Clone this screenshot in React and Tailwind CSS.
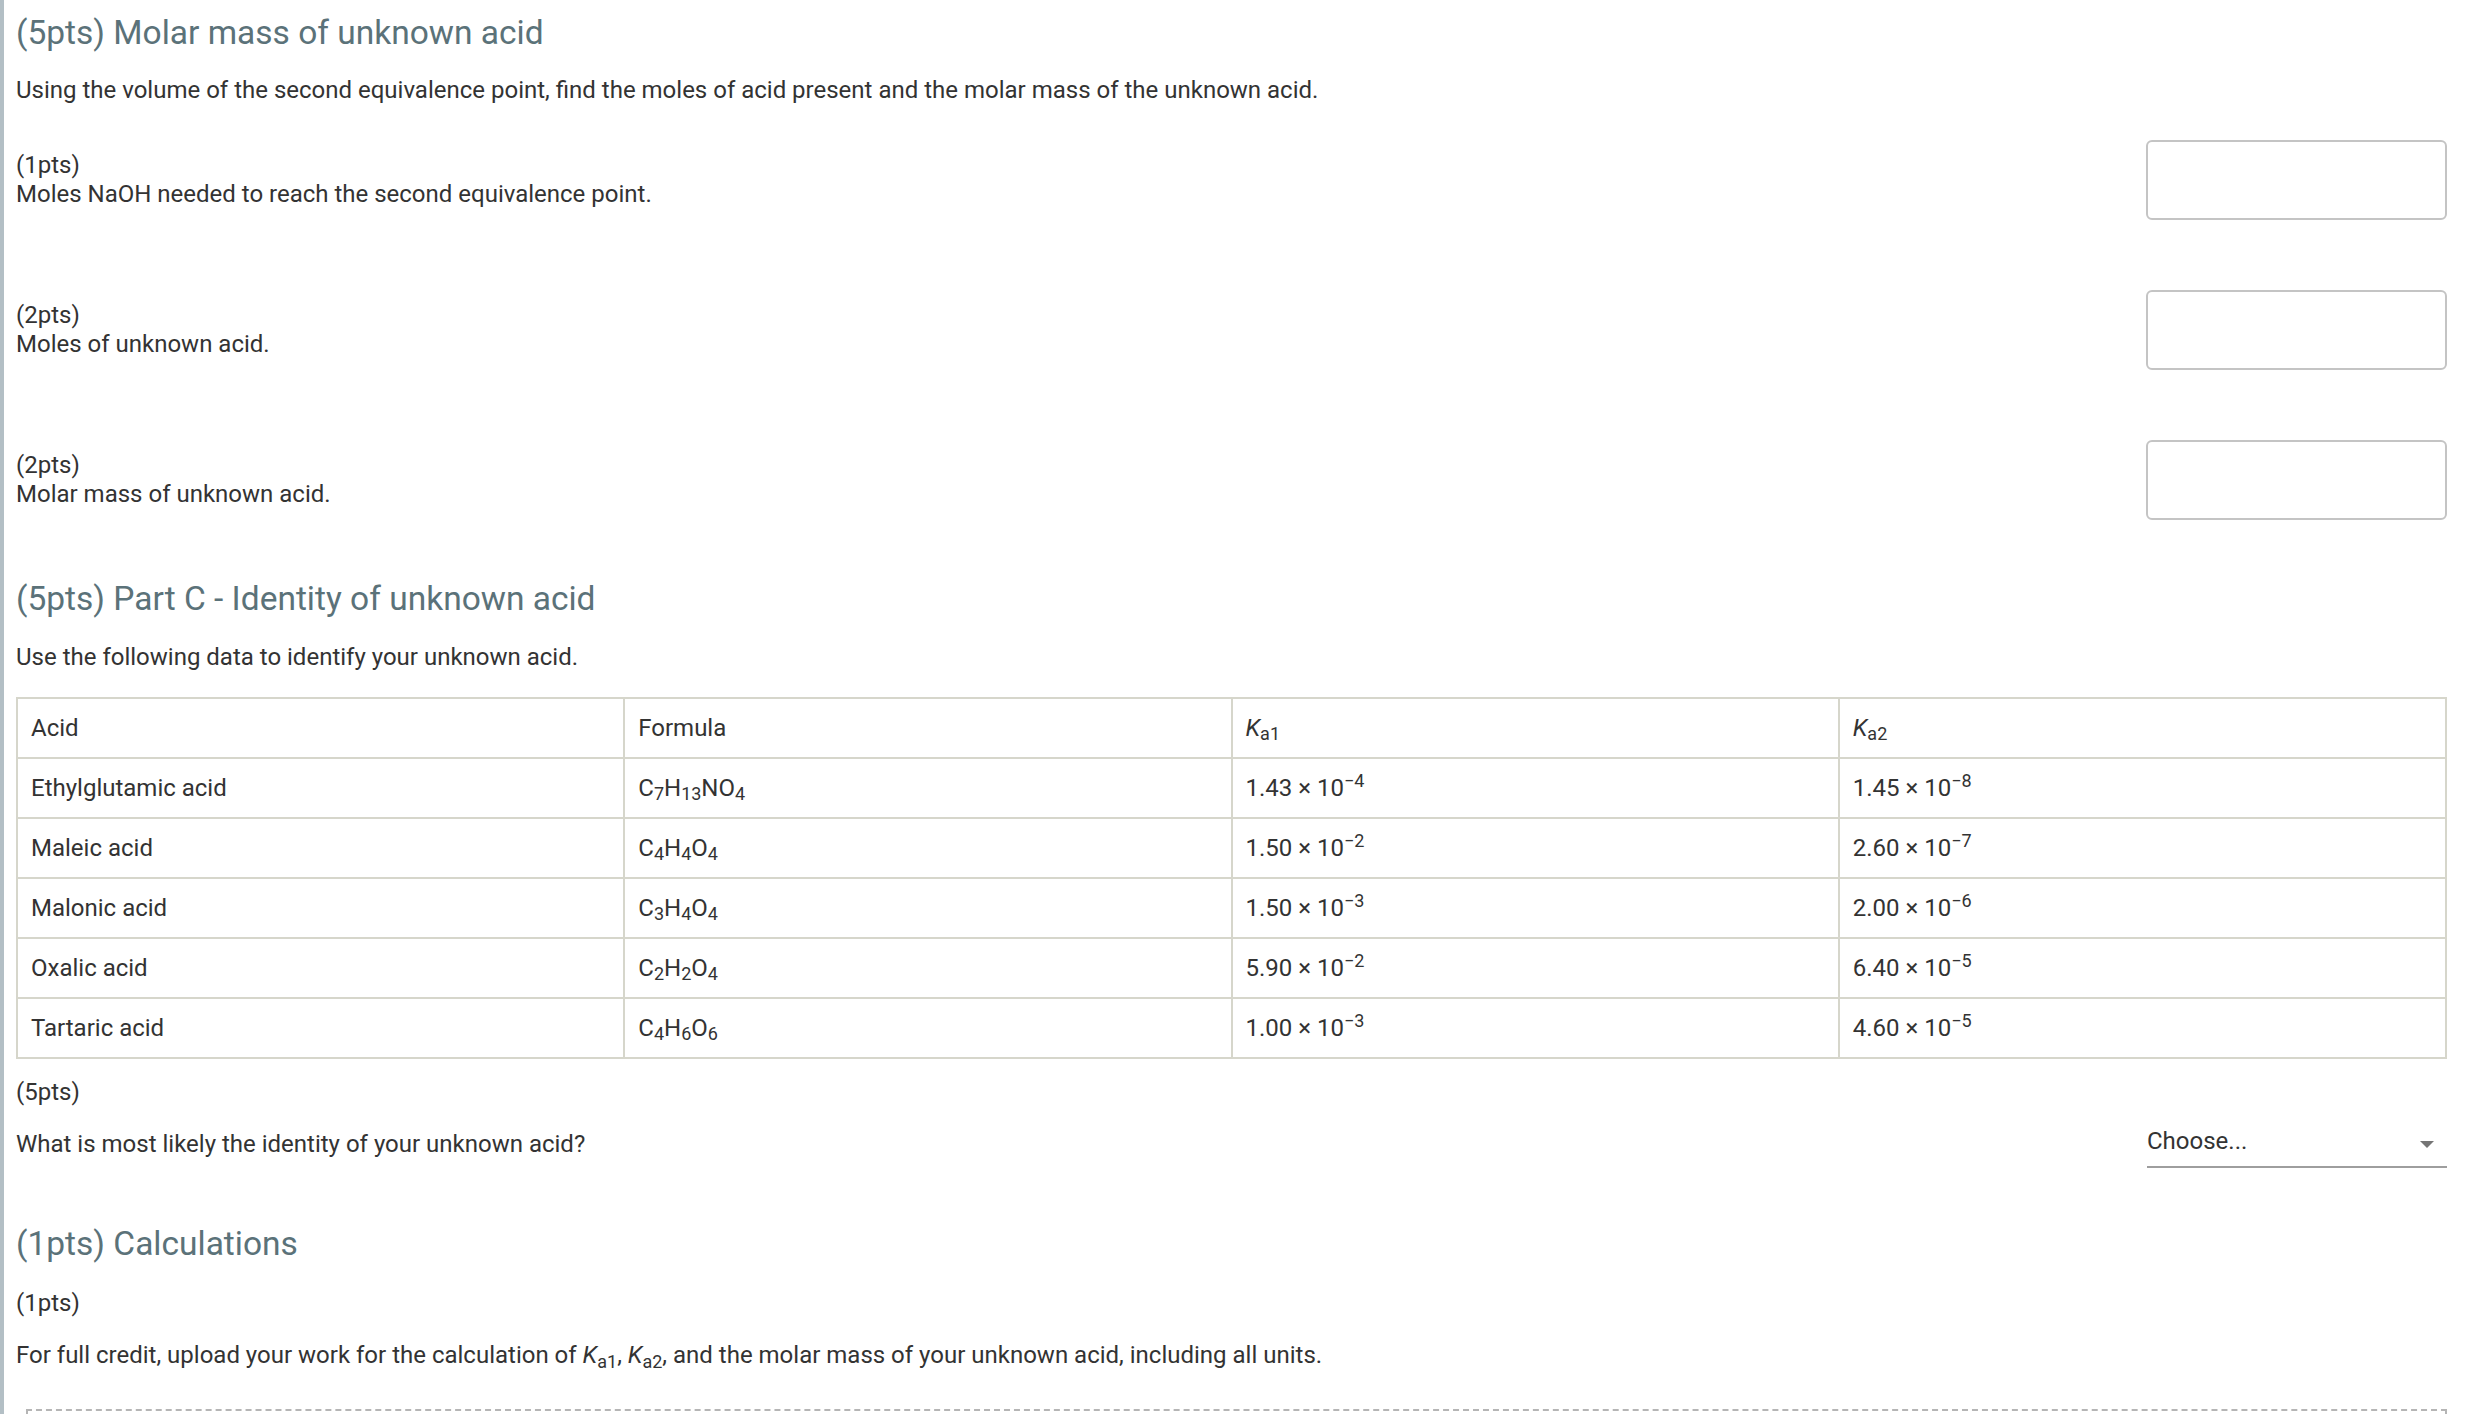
const acids = [
  { name: "Ethylglutamic acid", formula: ["C", "7", "H", "13", "NO", "4"], ka1: ["1.43", "−4"], ka2: ["1.45", "−8"] },
  { name: "Maleic acid", formula: ["C", "4", "H", "4", "O", "4"], ka1: ["1.50", "−2"], ka2: ["2.60", "−7"] },
  { name: "Malonic acid", formula: ["C", "3", "H", "4", "O", "4"], ka1: ["1.50", "−3"], ka2: ["2.00", "−6"] },
  { name: "Oxalic acid", formula: ["C", "2", "H", "2", "O", "4"], ka1: ["5.90", "−2"], ka2: ["6.40", "−5"] },
  { name: "Tartaric acid", formula: ["C", "4", "H", "6", "O", "6"], ka1: ["1.00", "−3"], ka2: ["4.60", "−5"] },
];

const questions = [
  { pts: "(1pts)", text: "Moles NaOH needed to reach the second equivalence point." },
  { pts: "(2pts)", text: "Moles of unknown acid." },
  { pts: "(2pts)", text: "Molar mass of unknown acid." },
];

function Formula({ parts }) {
  return (
    <span>
      {parts.map((p, i) =>
        i % 2 === 1 ? (
          <sub key={i} className="text-[0.75em]">{p}</sub>
        ) : (
          <span key={i}>{p}</span>
        )
      )}
    </span>
  );
}

function Sci({ value }) {
  return (
    <span>
      {value[0]} × 10<sup className="text-[0.75em]">{value[1]}</sup>
    </span>
  );
}

function Ka({ n }) {
  return (
    <span>
      <i>K</i>
      <sub className="text-[0.75em]">a{n}</sub>
    </span>
  );
}

function Heading({ children, className = "" }) {
  return (
    <h2 className={"text-[33.5px] leading-[40px] font-normal text-[#5b7279] " + className}>
      {children}
    </h2>
  );
}

export default function App() {
  const cell = "border-2 border-[#d6d6cb] px-[13px] h-[60px] align-middle text-left font-normal";
  return (
    <div
      className="min-h-screen bg-white border-l-[4px] border-[#b3bfc5] pl-[12px] pr-[45px] text-[24px] leading-[29px] text-[#333333]"
      style={{ fontFamily: "Roboto, 'Liberation Sans', sans-serif" }}
    >
      <Heading className="pt-[13px]">(5pts) Molar mass of unknown acid</Heading>
      <p className="mt-[23px]">
        Using the volume of the second equivalence point, find the moles of acid present and the molar mass of the unknown acid.
      </p>

      <div className="mt-[35px] flex flex-col gap-[70px]">
        {questions.map((q, i) => (
          <div key={i} className="flex items-start justify-between">
            <div className="pt-[11px]">
              <div>{q.pts}</div>
              <div>{q.text}</div>
            </div>
            <div className="w-[301px] h-[80px] border-2 border-[#c4c4c4] rounded-[6px] bg-white" />
          </div>
        ))}
      </div>

      <Heading className="mt-[59px]">(5pts) Part C - Identity of unknown acid</Heading>
      <p className="mt-[24px]">Use the following data to identify your unknown acid.</p>

      <table className="mt-[25px] w-full table-fixed border-collapse">
        <thead>
          <tr>
            <th className={cell}>Acid</th>
            <th className={cell}>Formula</th>
            <th className={cell}><Ka n="1" /></th>
            <th className={cell}><Ka n="2" /></th>
          </tr>
        </thead>
        <tbody>
          {acids.map((a) => (
            <tr key={a.name}>
              <td className={cell}>{a.name}</td>
              <td className={cell}><Formula parts={a.formula} /></td>
              <td className={cell}><Sci value={a.ka1} /></td>
              <td className={cell}><Sci value={a.ka2} /></td>
            </tr>
          ))}
        </tbody>
      </table>

      <p className="mt-[19px]">(5pts)</p>
      <div className="mt-[20px] flex items-start justify-between">
        <p className="pt-[3px]">What is most likely the identity of your unknown acid?</p>
        <div className="w-[300px] border-b-2 border-[#9e9e9e] pb-[10px] flex items-center justify-between">
          <span>Choose...</span>
          <svg width="14" height="8" viewBox="0 0 14 8" className="mr-[13px] mt-[6px]">
            <polygon points="0,0 14,0 7,7" fill="#757575" />
          </svg>
        </div>
      </div>

      <Heading className="mt-[56px]">(1pts) Calculations</Heading>
      <p className="mt-[25px]">(1pts)</p>
      <p className="mt-[23px]">
        For full credit, upload your work for the calculation of <Ka n="1" />, <Ka n="2" />, and the molar mass of your unknown acid, including all units.
      </p>

      <div className="mt-[39px] ml-[10px] h-[120px] border-2 border-dashed border-[#b5b5b5]" />
    </div>
  );
}
